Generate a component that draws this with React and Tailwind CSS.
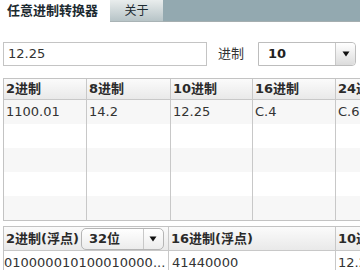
import React from "react";

const font = { fontFamily: '"DejaVu Sans", "Noto Sans CJK SC", sans-serif' };

const heads1 = ["2进制", "8进制", "10进制", "16进制", "24进制", "36进制"];
const data1 = ["1100.01", "14.2", "12.25", "C.4", "C.6", "C.9"];
const widths1 = ["w-[83px]", "w-[84px]", "w-[82px]", "w-[83px]", "w-[83px]", "w-[83px]"];

function Arrow() {
  return (
    <svg width="8" height="6" viewBox="0 0 8 6">
      <path d="M0.5 0.5 L7.5 0.5 L4 5.5 Z" fill="#111" />
    </svg>
  );
}

export default function App() {
  return (
    <div className="w-[360px] h-[270px] overflow-hidden bg-white text-[#222]" style={font}>
      {/* tab bar */}
      <div className="flex h-[22px] bg-[#93a9b0]">
        <div className="w-[110px] h-[22px] bg-white flex items-center pl-[7px] text-[13px] font-bold text-[#1c2a30]">
          任意进制转换器
        </div>
        <div className="w-[53px] h-[22px] flex items-center justify-center text-[12px] text-[#1c2a30] bg-gradient-to-b from-[#e9eded] to-[#b7c4c7] border-b border-[#a9b3b5]">
          关于
        </div>
        <div className="flex-1 h-[22px] border-b border-[#a5aeb0]" />
      </div>

      {/* input row */}
      <div className="flex items-center mt-[20px] h-[24px]">
        <div className="ml-[3px] w-[204px] h-[24px] border border-[#c4c4c4] flex items-center pl-[4px] text-[13px] text-[#333]">
          12.25
        </div>
        <div className="ml-[11px] text-[13px] text-[#333]">进制</div>
        <div className="ml-[14px] w-[98px] h-[24px] border border-[#bdbdbd] rounded-r-[4px] flex">
          <div className="flex-1 flex items-center pl-[9px] text-[13px] font-bold">10</div>
          <div className="w-[20px] h-full border-l border-[#c8c8c8] rounded-r-[4px] bg-gradient-to-b from-[#ffffff] to-[#dcdcdc] flex items-center justify-center">
            <Arrow />
          </div>
        </div>
      </div>

      {/* table 1 */}
      <div className="mt-[12px] ml-[3px] border-t border-l border-b border-[#c3c3c3] w-[600px]">
        <div className="flex h-[21px] border-b border-[#c8c8c8] bg-gradient-to-b from-[#fbfbfb] to-[#e9e9e9]">
          {heads1.map((h, i) => (
            <div key={i} className={`${widths1[i]} shrink-0 border-r border-[#c8c8c8] pl-[2px] flex items-center text-[13px] font-bold text-[#2a2a2a]`}>
              {h}
            </div>
          ))}
        </div>
        {[0, 1, 2, 3, 4].map((r) => (
          <div key={r} className={`flex h-[24px] ${r % 2 === 0 ? "bg-[#f7f7f7]" : "bg-white"}`}>
            {widths1.map((w, i) => (
              <div key={i} className={`${w} shrink-0 border-r border-[#c8c8c8] pl-[2px] flex items-center text-[13px] text-[#333]`}>
                {r === 0 ? data1[i] : ""}
              </div>
            ))}
          </div>
        ))}
      </div>

      {/* table 2 */}
      <div className="mt-[5px] ml-[3px] border-t border-l border-[#c3c3c3] w-[600px]">
        <div className="flex h-[24px] border-b border-[#c8c8c8] bg-gradient-to-b from-[#fbfbfb] to-[#e9e9e9]">
          <div className="w-[165px] shrink-0 border-r border-[#c8c8c8] pl-[2px] flex items-center text-[13px] font-bold text-[#2a2a2a]">
            <span>2进制(浮点)</span>
            <div className="ml-[2px] w-[83px] h-[22px] border border-[#b5b5b5] rounded-[5px] bg-gradient-to-b from-[#ffffff] to-[#ececec] flex">
              <div className="flex-1 flex items-center pl-[7px] text-[13px] font-bold">32位</div>
              <div className="w-[20px] h-full border-l border-[#c8c8c8] flex items-center justify-center">
                <Arrow />
              </div>
            </div>
          </div>
          <div className="w-[167px] shrink-0 border-r border-[#c8c8c8] pl-[2px] flex items-center text-[13px] font-bold text-[#2a2a2a]">
            16进制(浮点)
          </div>
          <div className="w-[167px] shrink-0 border-r border-[#c8c8c8] pl-[2px] flex items-center text-[13px] font-bold text-[#2a2a2a]">
            10进制(浮点)
          </div>
        </div>
        <div className="flex h-[24px] bg-white">
          <div className="w-[165px] shrink-0 border-r border-[#c8c8c8] flex items-center text-[13px] text-[#333] overflow-hidden whitespace-nowrap">
            010000010100010000...
          </div>
          <div className="w-[167px] shrink-0 border-r border-[#c8c8c8] pl-[3px] flex items-center text-[13px] text-[#333]">
            41440000
          </div>
          <div className="w-[167px] shrink-0 border-r border-[#c8c8c8] pl-[2px] flex items-center text-[13px] text-[#333]">
            12.25
          </div>
        </div>
      </div>
    </div>
  );
}
